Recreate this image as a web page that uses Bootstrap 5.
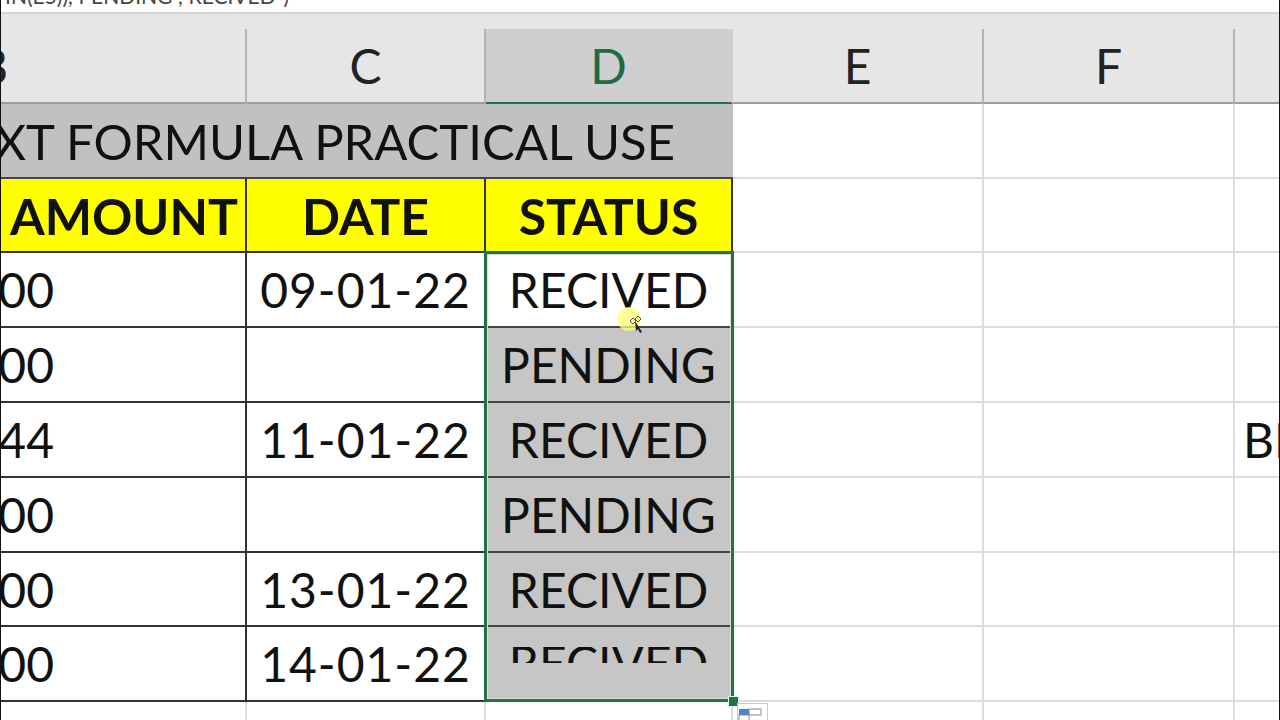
<!DOCTYPE html>
<html lang="en">
<head>
<meta charset="utf-8">
<title>TEXT FORMULA PRACTICAL USE</title>
<link href="https://cdn.jsdelivr.net/npm/bootstrap@5.3.0/dist/css/bootstrap.min.css" rel="stylesheet">
<style>
html,body{margin:0;height:720px;overflow:hidden;background:#fff}
.stage{position:relative;width:1280px;height:720px;overflow:hidden;font-family:"Lato","Liberation Sans",sans-serif;color:#111;border-left:1px solid #111;border-right:1px solid #111}
.fxbar{height:14px;overflow:hidden;border-bottom:2px solid #d4d4d4;background:#fff}
.fxtext{font-size:21px;line-height:20px;margin-top:-14px;padding-left:4px;color:#444;white-space:nowrap;display:block}
.band{height:15px;background:#e6e6e6}
.sheet{display:grid;grid-template-columns:246px 239px 247px 251px 251px 44px;grid-template-rows:75px 75px 74px 75px 75px 75px 75px 74px 75px 20px;width:1278px}
.cell{display:flex;align-items:center;justify-content:center;overflow:hidden;white-space:nowrap;font-size:48px;line-height:1;padding-top:1px;border-right:2px solid #dcdcdc;border-bottom:2px solid #dcdcdc}
.cell.lastc{border-right:0}
.colhead{background:#e6e6e6;border-right:2px solid #b4b4b4;border-bottom:2px solid #9e9e9e;padding-top:1px;font-size:48px;color:#222}
.colhead.sel{background:#cfcfcf;color:#1f6b43;border-bottom:2px solid #217346;border-right-color:#cfcfcf}
.clipl{justify-content:flex-end}
.merged{grid-column:span 3;background:#c1c1c1;border-right:0;border-bottom:2px solid #444;padding-right:58px;justify-content:flex-end;font-size:49px}
.yel{background:#ff0;font-weight:700;border-right:2px solid #333;border-bottom:2px solid #333;font-size:50px}
.dk{border-right:2px solid #333;border-bottom:2px solid #333}
.dts{letter-spacing:1px}
.gry{background:#c6c6c6;border-bottom-color:#444;border-right-color:#c6c6c6}
.whi{border-bottom-color:#444;border-right-color:#fff}
.amt{padding-right:191px}
.hdr{padding-right:237px}
.ampad{padding-right:7px}
.blpad{justify-content:flex-start;padding-left:8px}
.cutwrap{align-items:flex-start;padding-top:20px}
.cutbox{display:block;height:16px;overflow:hidden}
.cutin{display:block;margin-top:-8px}
.selbox{position:absolute;left:483px;top:251px;width:250px;height:451px;border:3px solid #217346;pointer-events:none;box-shadow:inset 0 0 0 1px #cfe3d6}
.handle{position:absolute;left:727px;top:696px;width:9px;height:9px;background:#217346;border:1px solid #e8f1eb;box-sizing:content-box}
.paste{position:absolute;left:736px;top:703px;width:31px;height:20px;border:1px solid #c8c8c8;background:#fff}
.halo{position:absolute;left:616px;top:307px;width:24px;height:24px;border-radius:50%;background:rgba(255,255,120,.75)}
.arrow{position:absolute;left:628px;top:315px;width:16px;height:20px}
</style>
</head>
<body>
<div class="stage">
  <div class="fxbar"><span class="fxtext">IN(E5)),"PENDING","RECIVED")</span></div>
  <div class="band"></div>
  <div class="sheet">
    <div class="cell colhead clipl hdr">B</div>
    <div class="cell colhead">C</div>
    <div class="cell colhead sel">D</div>
    <div class="cell colhead">E</div>
    <div class="cell colhead">F</div>
    <div class="cell colhead lastc"></div>

    <div class="cell merged">TEXT FORMULA PRACTICAL USE</div>
    <div class="cell"></div><div class="cell"></div><div class="cell lastc"></div>

    <div class="cell yel clipl ampad">AMOUNT</div>
    <div class="cell yel">DATE</div>
    <div class="cell yel">STATUS</div>
    <div class="cell"></div><div class="cell"></div><div class="cell lastc"></div>

    <div class="cell dk clipl amt">00</div>
    <div class="cell dk dts">09-01-22</div>
    <div class="cell whi">RECIVED</div>
    <div class="cell"></div><div class="cell"></div><div class="cell lastc"></div>

    <div class="cell dk clipl amt">00</div>
    <div class="cell dk"></div>
    <div class="cell gry">PENDING</div>
    <div class="cell"></div><div class="cell"></div><div class="cell lastc"></div>

    <div class="cell dk clipl amt">44</div>
    <div class="cell dk dts">11-01-22</div>
    <div class="cell gry">RECIVED</div>
    <div class="cell"></div><div class="cell"></div><div class="cell lastc blpad">BL</div>

    <div class="cell dk clipl amt">00</div>
    <div class="cell dk"></div>
    <div class="cell gry">PENDING</div>
    <div class="cell"></div><div class="cell"></div><div class="cell lastc"></div>

    <div class="cell dk clipl amt">00</div>
    <div class="cell dk dts">13-01-22</div>
    <div class="cell gry">RECIVED</div>
    <div class="cell"></div><div class="cell"></div><div class="cell lastc"></div>

    <div class="cell dk clipl amt">00</div>
    <div class="cell dk dts">14-01-22</div>
    <div class="cell gry cutwrap"><span class="cutbox"><span class="cutin">RECIVED</span></span></div>
    <div class="cell"></div><div class="cell"></div><div class="cell lastc"></div>

    <div class="cell"></div><div class="cell"></div><div class="cell"></div>
    <div class="cell"></div><div class="cell"></div><div class="cell lastc"></div>
  </div>
  <div class="selbox"></div>
  <div class="handle"></div>
  <div class="paste">
    <svg class="d-block" width="29" height="18" viewBox="0 0 29 18"><rect x="1" y="5" width="10" height="6" fill="#4f7fe0"/><rect x="11" y="5" width="12" height="6" fill="#fff" stroke="#888"/><rect x="1" y="11" width="10" height="8" fill="#fff" stroke="#888"/></svg>
  </div>
  <div class="halo"></div>
  <svg class="arrow" viewBox="0 0 16 20"><g fill="none" stroke="#555" stroke-width="1"><path d="M4 3l3 3-3 3-3-3zM9 1l3 3-3 3-3-3z"/></g><path d="M6 6l7 11-2 1-2-4-2 2z" fill="#222"/></svg>
</div>
</body>
</html>
